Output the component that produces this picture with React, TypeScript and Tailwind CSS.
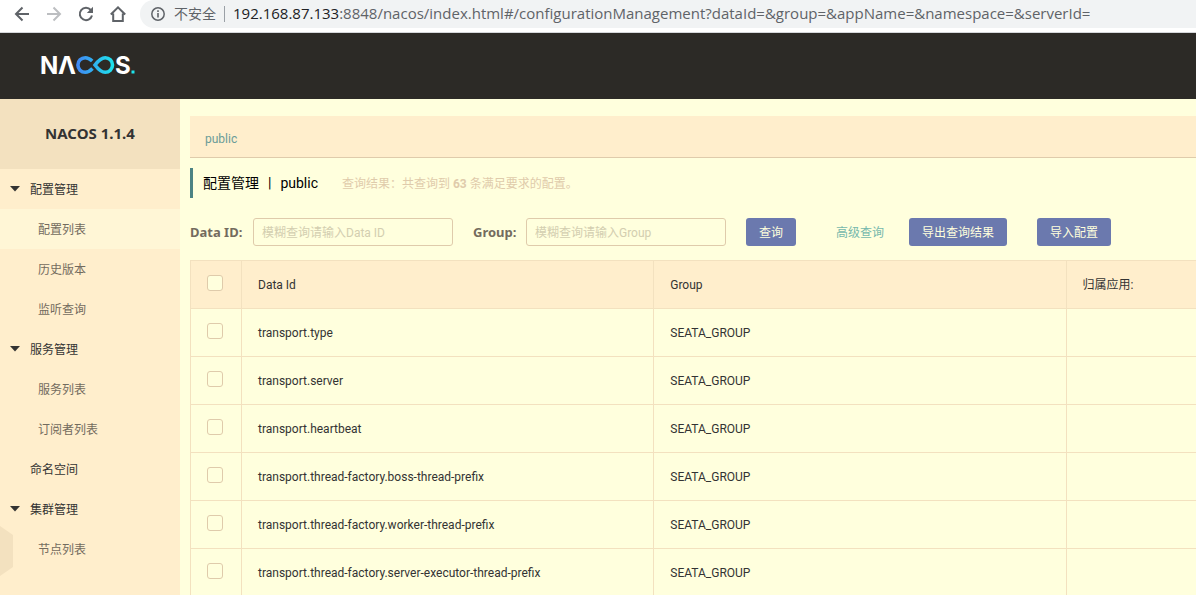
import React, { useState } from 'react';

interface MenuItem {
  label: string;
  children?: string[];
}

const menu: MenuItem[] = [
  { label: '配置管理', children: ['配置列表', '历史版本', '监听查询'] },
  { label: '服务管理', children: ['服务列表', '订阅者列表'] },
  { label: '命名空间' },
  { label: '集群管理', children: ['节点列表'] },
];

const configs = [
  'transport.type',
  'transport.server',
  'transport.heartbeat',
  'transport.thread-factory.boss-thread-prefix',
  'transport.thread-factory.worker-thread-prefix',
  'transport.thread-factory.server-executor-thread-prefix',
].map(dataId => ({ dataId, group: 'SEATA_GROUP', app: '' }));

const BrowserBar: React.FC = () => (
  <div className="flex h-[33px] shrink-0 items-start border-b border-[#d5d7da] bg-white pl-[14px]">
    <div className="flex h-7 items-center gap-4 text-[#5f6368]">
      <button type="button" aria-label="后退" className="h-4 w-4">
        <svg viewBox="0 0 16 16" className="h-4 w-4" fill="none" stroke="currentColor" strokeWidth="2">
          <path d="M15 8H2.5M8.5 1.5L2 8l6.500 6.500" />
        </svg>
      </button>
      <button type="button" aria-label="前进" className="h-4 w-4 text-[#bcbec1]">
        <svg viewBox="0 0 16 16" className="h-4 w-4" fill="none" stroke="currentColor" strokeWidth="2">
          <path d="M1 8h12.500M7.500 1.500L14 8l-6.500 6.500" />
        </svg>
      </button>
      <button type="button" aria-label="刷新" className="h-4 w-4">
        <svg viewBox="0 0 16 16" className="h-4 w-4" fill="none" stroke="currentColor" strokeWidth="2">
          <path d="M12.800 4A6.200 6.200 0 1 0 14 9.500" />
          <path d="M15 .8V7H8.800z" fill="currentColor" stroke="none" />
        </svg>
      </button>
      <button type="button" aria-label="主页" className="h-4 w-4">
        <svg viewBox="0 0 16 16" className="h-4 w-4" fill="none" stroke="currentColor" strokeWidth="2">
          <path d="M.8 8.500L8 1.400l7.200 7.100M3.200 7.500V15h9.600V7.500" />
        </svg>
      </button>
    </div>
    <div className="ml-[14px] flex h-7 min-w-0 flex-1 items-center rounded-l-full bg-[#f1f3f4] pl-[10px] text-[#5f6368]">
      <svg viewBox="0 0 16 16" className="h-4 w-4 shrink-0" fill="none" stroke="currentColor">
        <circle cx="8" cy="8" r="6.200" strokeWidth="1.500" />
        <path d="M8 7v4.500M8 4.300v1.600" strokeWidth="1.600" />
      </svg>
      <span className="ml-2 text-sm whitespace-nowrap">不安全</span>
      <span className="mx-2 h-4 w-px bg-[#9aa0a6]" />
      <span className="truncate pb-0.5 font-['Open_Sans',sans-serif] text-[15px]">
        <span className="text-[#202124]">192.168.87.133</span>
        :8848/nacos/index.html#/configurationManagement?dataId=&amp;group=&amp;appName=&amp;namespace=&amp;serverId=
      </span>
    </div>
  </div>
);

const Logo: React.FC = () => (
  <svg viewBox="-4 -9 104 40" className="-ml-1 h-10 w-[104px]" role="img" aria-label="NACOS">
    <defs>
      <linearGradient id="loop" gradientUnits="userSpaceOnUse" x1="35" y1="0" x2="73" y2="0">
        <stop offset="0" stopColor="#4285f4" />
        <stop offset="1" stopColor="#1de4ec" />
      </linearGradient>
    </defs>
    <g fill="#fff" fontFamily="Inter, sans-serif" fontWeight="700" fontSize="24">
      <text x="-1" y="18.500">N</text>
      <text x="17" y="18.500">Λ</text>
      <text x="74" y="18.500">S</text>
    </g>
    <path
      d="M51.500 13.500C49 16 46.500 17.300 44.200 17.300a7.300 7.300 0 1 1 0-14.600c2 0 4.500 1 7 3.300M54 10C57 6 60 2.700 64.200 2.700a7.300 7.300 0 0 1 0 14.600C60 17.300 57 14 54 10z"
      fill="none"
      stroke="url(#loop)"
      strokeWidth="3.600"
    />
    <rect x="90.500" y="15.500" width="3" height="3" fill="#1de4ec" />
  </svg>
);

const Sidebar: React.FC = () => (
  <aside className="relative w-[180px] shrink-0 bg-[#ffeecc]">
    <h1 className="flex h-[70px] items-center justify-center bg-[#f3e1bf] pb-0.5 font-['Noto_Sans',sans-serif] text-[15px] font-bold text-[#333]">
      NACOS 1.1.4
    </h1>
    <nav>
      {menu.map(item => (
        <div key={item.label}>
          <a href="#" className="flex h-10 items-center pt-px pl-[10px] text-[#333]">
            <span className="w-5">
              {item.children && (
                <svg viewBox="0 0 10 8" className="h-2 w-[10px]" fill="currentColor">
                  <path d="M0 0h10L5 5.500z" />
                </svg>
              )}
            </span>
            {item.label}
          </a>
          {item.children?.map(child => (
            <a
              key={child}
              href="#"
              className={`flex h-10 items-center pt-px pl-[38px] text-[#736b5e] ${child === '配置列表' ? 'bg-[#fff6d6]' : ''}`}
            >
              {child}
            </a>
          ))}
        </div>
      ))}
    </nav>
    <button type="button" aria-label="收起菜单" className="absolute top-[427px] left-0 h-[50px] w-[13px] text-[#f3e1bf]">
      <svg viewBox="0 0 13 50" className="h-[50px] w-[13px]" fill="currentColor">
        <path d="M0 0l13 9v32L0 50z" />
      </svg>
    </button>
  </aside>
);

const checkboxClass =
  'block h-4 w-4 appearance-none rounded-[3px] border border-[#dfcbab] bg-[#ffffdd] checked:bg-[#6b79ae]';
const inputClass =
  'h-7 w-[200px] rounded-[3px] border border-[#dfcbab] bg-transparent px-2 pt-0.5 outline-none placeholder:text-[#d3ceb0]';
const labelClass = "pt-px font-['Noto_Sans',sans-serif] text-[13px] font-bold whitespace-nowrap text-[#736b5e]";
const buttonClass = 'h-7 rounded-[3px] bg-[#6b79ae] px-[13px] pt-px whitespace-nowrap text-[#ffffdd]';

const App: React.FC = () => {
  const [selected, setSelected] = useState<string[]>([]);
  const [dataId, setDataId] = useState('');
  const [group, setGroup] = useState('');

  const toggle = (id: string) =>
    setSelected(prev => (prev.includes(id) ? prev.filter(s => s !== id) : [...prev, id]));
  const allSelected = selected.length === configs.length;

  return (
    <div className="flex h-screen flex-col overflow-hidden bg-[#ffffdd] font-['Roboto','Noto_Sans_CJK_SC',sans-serif] text-xs text-[#333]">
      <BrowserBar />
      <header className="flex h-[66px] shrink-0 items-center bg-[#2c2a26] pl-[41px]">
        <Logo />
      </header>
      <div className="flex min-h-0 flex-1">
        <Sidebar />
        <main className="min-w-0 flex-1 overflow-hidden pt-[17px] pl-[10px]">
          <div className="flex h-[42px] items-center border-b border-[#dfcbab] bg-[#ffeecc] px-[15px] pt-1">
            <a href="#" className="text-[#6b9c98]">public</a>
          </div>
          <div className="mt-[10px] flex h-[30px] items-center border-l-[3px] border-[#4c8383] pl-[10px]">
            <h2 className="flex gap-[9px] text-sm text-black">
              <span>配置管理</span>
              <span>|</span>
              <span>public</span>
            </h2>
            <p className="ml-6 pt-px text-[#dfcbab]">
              查询结果：共查询到 <strong>63</strong> 条满足要求的配置。
            </p>
          </div>
          <form className="mt-5 flex items-center" onSubmit={e => e.preventDefault()}>
            <label htmlFor="dataId" className={`w-[63px] ${labelClass}`}>Data ID:</label>
            <input id="dataId" className={inputClass} placeholder="模糊查询请输入Data ID" value={dataId} onChange={e => setDataId(e.target.value)} />
            <label htmlFor="group" className={`ml-5 w-[53px] ${labelClass}`}>Group:</label>
            <input id="group" className={inputClass} placeholder="模糊查询请输入Group" value={group} onChange={e => setGroup(e.target.value)} />
            <button type="submit" className={`ml-5 ${buttonClass}`}>查询</button>
            <a href="#" className="mr-[25px] ml-10 pt-px whitespace-nowrap text-[#76b8ac]">高级查询</a>
            <button type="button" className={buttonClass}>导出查询结果</button>
            <button type="button" className={`ml-[30px] ${buttonClass}`}>导入配置</button>
          </form>
          <table className="mt-[14px] w-full table-fixed border-collapse text-left">
            <thead>
              <tr className="h-12 bg-[#ffeecc]">
                <th className="w-[51px] border border-[#f3e1bf] pb-[3px] pl-4">
                  <input
                    type="checkbox"
                    aria-label="全选"
                    className={checkboxClass}
                    checked={allSelected}
                    onChange={() => setSelected(allSelected ? [] : configs.map(c => c.dataId))}
                  />
                </th>
                <th className="w-[41%] border border-[#f3e1bf] px-4 font-normal">Data Id</th>
                <th className="w-[41%] border border-[#f3e1bf] px-4 font-normal">Group</th>
                <th className="border border-r-0 border-[#f3e1bf] px-4 font-normal">归属应用:</th>
              </tr>
            </thead>
            <tbody>
              {configs.map(config => (
                <tr key={config.dataId} className="h-12">
                  <td className="border border-[#f3e1bf] pb-[3px] pl-4">
                    <input
                      type="checkbox"
                      aria-label={config.dataId}
                      className={checkboxClass}
                      checked={selected.includes(config.dataId)}
                      onChange={() => toggle(config.dataId)}
                    />
                  </td>
                  <td className="border border-[#f3e1bf] px-4">{config.dataId}</td>
                  <td className="border border-[#f3e1bf] px-4">{config.group}</td>
                  <td className="border border-r-0 border-[#f3e1bf] px-4">{config.app}</td>
                </tr>
              ))}
            </tbody>
          </table>
        </main>
      </div>
    </div>
  );
};

export default App;
